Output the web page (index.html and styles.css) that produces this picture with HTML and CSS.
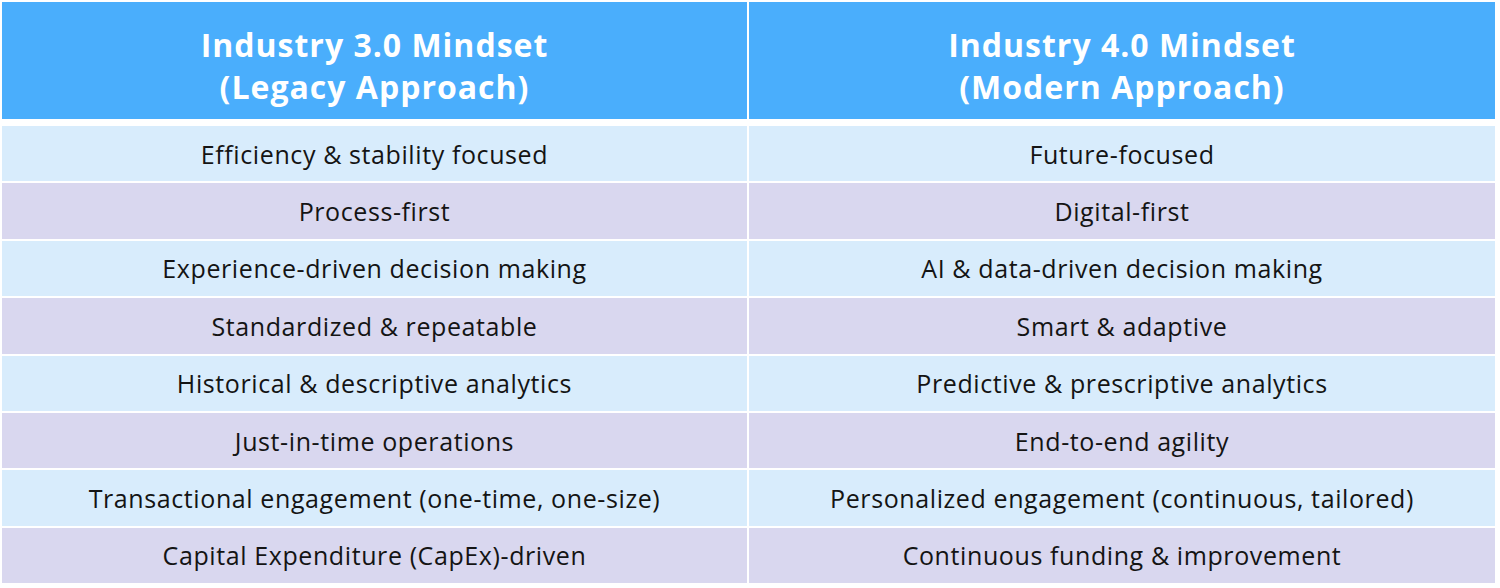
FILE: index.html
```html
<!DOCTYPE html>
<html>
<head>
<meta charset="utf-8">
<link rel="stylesheet" href="styles.css">
</head>
<body>
<div class="table">
  <div class="head">Industry 3.0 Mindset<br>(Legacy Approach)</div>
  <div class="head">Industry 4.0 Mindset<br>(Modern Approach)</div>
  <div class="sep"></div>
  <div class="cell a">Efficiency &amp; stability focused</div>
  <div class="cell a">Future-focused</div>
  <div class="cell b">Process-first</div>
  <div class="cell b">Digital-first</div>
  <div class="cell a">Experience-driven decision making</div>
  <div class="cell a">AI &amp; data-driven decision making</div>
  <div class="cell b">Standardized &amp; repeatable</div>
  <div class="cell b">Smart &amp; adaptive</div>
  <div class="cell a">Historical &amp; descriptive analytics</div>
  <div class="cell a">Predictive &amp; prescriptive analytics</div>
  <div class="cell b">Just-in-time operations</div>
  <div class="cell b">End-to-end agility</div>
  <div class="cell a">Transactional engagement (one-time, one-size)</div>
  <div class="cell a">Personalized engagement (continuous, tailored)</div>
  <div class="cell b">Capital Expenditure (CapEx)-driven</div>
  <div class="cell b">Continuous funding &amp; improvement</div>
</div>
</body>
</html>
```
FILE: styles.css
```css
html, body {
  margin: 0;
  background: #ffffff;
}
body {
  padding: 2px 0 0 2px;
  font-family: "Open Sans", "Noto Sans", "Liberation Sans", sans-serif;
}
.table {
  width: 1493px;
  display: grid;
  grid-template-columns: 745px 746px;
  column-gap: 2px;
  row-gap: 2px;
  grid-template-rows: 117px 3px repeat(8, 55.4px);
}
.sep {
  grid-column: 1 / span 2;
}
.head {
  background: #4aaefc;
  color: #ffffff;
  font-weight: 700;
  font-size: 32px;
  letter-spacing: 1px;
  line-height: 42px;
  padding-top: 10px;
  box-sizing: border-box;
  display: flex;
  align-items: center;
  justify-content: center;
  text-align: center;
}
.cell {
  display: flex;
  align-items: center;
  justify-content: center;
  text-align: center;
  font-size: 25px;
  letter-spacing: 0.6px;
  color: #141414;
}
.cell.a { background: #d8ecfc; }
.cell.b { background: #d9d7ef; }
```
